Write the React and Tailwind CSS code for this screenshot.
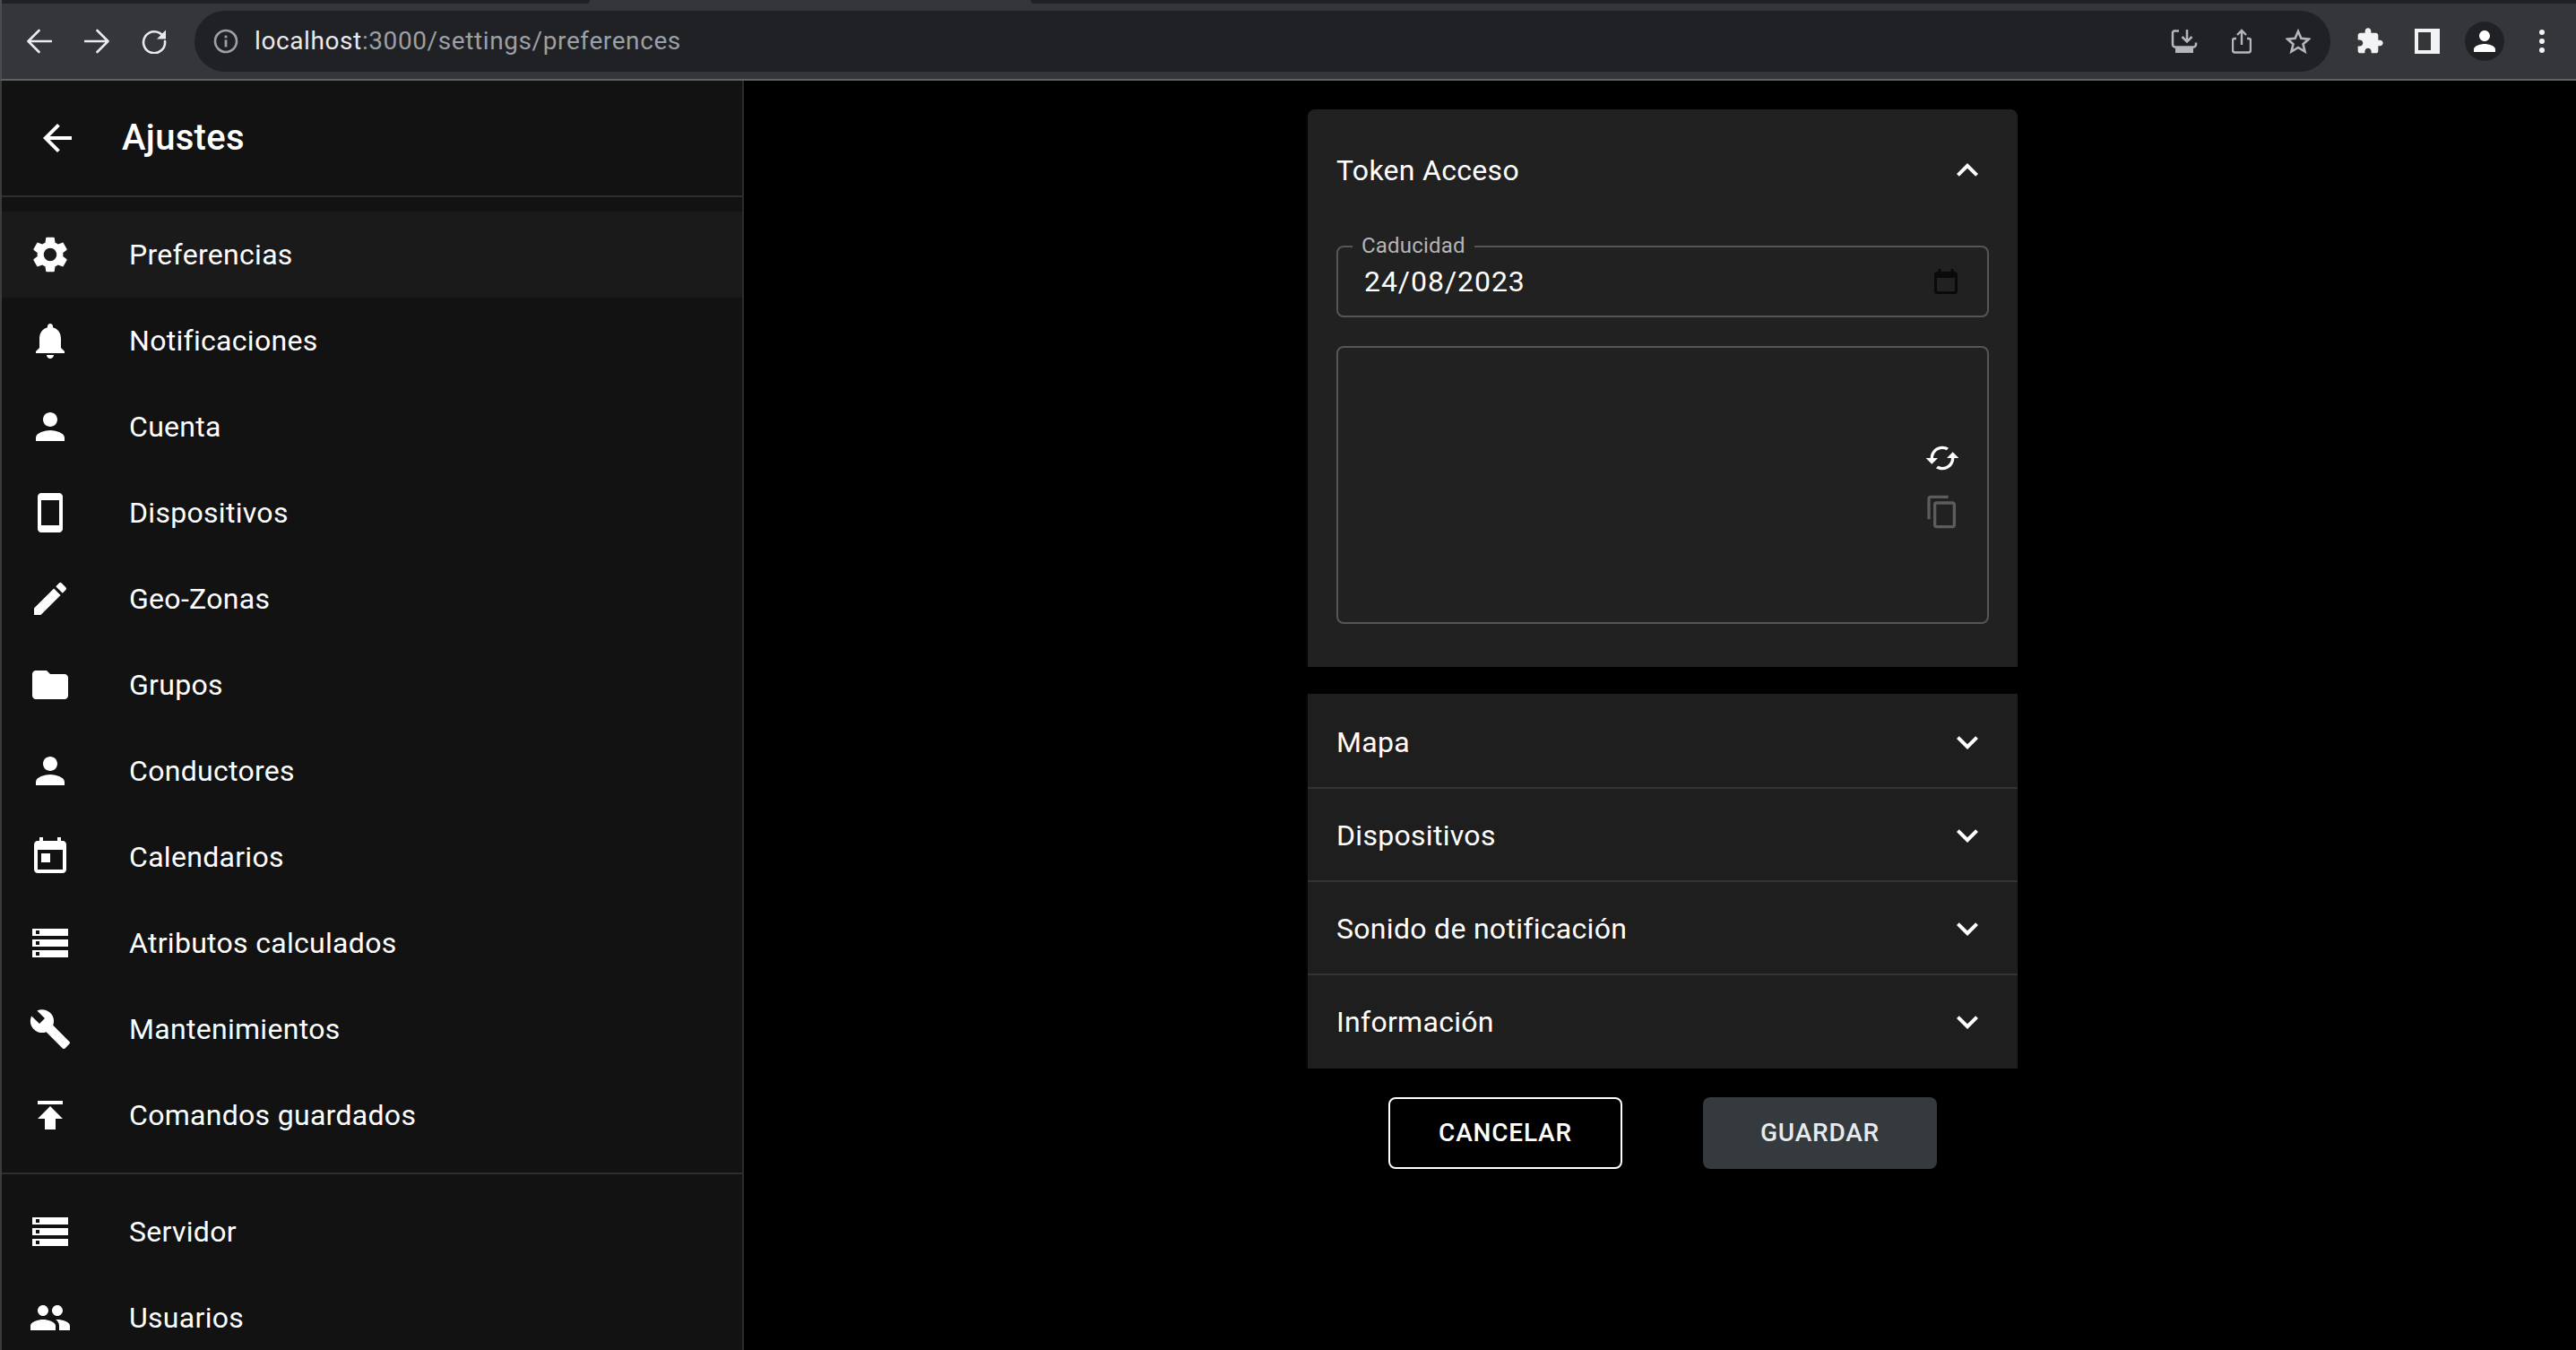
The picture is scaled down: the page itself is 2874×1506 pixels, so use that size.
import React from "react";

const P = {
  settings: "M19.14 12.94c.04-.3.06-.61.06-.94 0-.32-.02-.64-.07-.94l2.03-1.58c.18-.14.23-.41.12-.61l-1.92-3.32c-.12-.22-.37-.29-.59-.22l-2.39.96c-.5-.38-1.03-.7-1.62-.94l-.36-2.54c-.04-.24-.24-.41-.48-.41h-3.84c-.24 0-.43.17-.47.41l-.36 2.54c-.59.24-1.13.57-1.62.94l-2.39-.96c-.22-.08-.47 0-.59.22L2.74 8.87c-.12.21-.08.47.12.61l2.03 1.58c-.05.3-.09.63-.09.94s.02.64.07.94l-2.03 1.58c-.18.14-.23.41-.12.61l1.92 3.32c.12.22.37.29.59.22l2.39-.96c.5.38 1.03.7 1.62.94l.36 2.54c.05.24.24.41.48.41h3.84c.24 0 .44-.17.47-.41l.36-2.54c.59-.24 1.13-.56 1.62-.94l2.39.96c.22.08.47 0 .59-.22l1.92-3.32c.12-.22.07-.47-.12-.61l-2.01-1.58zM12 15.6c-1.98 0-3.6-1.62-3.6-3.6s1.62-3.6 3.6-3.6 3.6 1.62 3.6 3.6-1.62 3.6-3.6 3.6z",
  bell: "M12 22c1.1 0 2-.9 2-2h-4c0 1.1.89 2 2 2zm6-6v-5c0-3.07-1.64-5.64-4.5-6.32V4c0-.83-.67-1.5-1.5-1.5s-1.5.67-1.5 1.5v.68C7.63 5.36 6 7.92 6 11v5l-2 2v1h16v-1l-2-2z",
  person: "M12 12c2.21 0 4-1.79 4-4s-1.79-4-4-4-4 1.79-4 4 1.79 4 4 4zm0 2c-2.67 0-8 1.34-8 4v2h16v-2c0-2.66-5.33-4-8-4z",
  phone: "M17 1.01 7 1c-1.1 0-2 .9-2 2v18c0 1.1.9 2 2 2h10c1.1 0 2-.9 2-2V3c0-1.1-.9-1.99-2-1.99zM17 19H7V5h10v14z",
  edit: "M3 17.25V21h3.75L17.81 9.94l-3.75-3.75L3 17.25zM20.71 7.04c.39-.39.39-1.02 0-1.41l-2.34-2.34a.9959.9959 0 0 0-1.41 0l-1.83 1.83 3.75 3.75 1.83-1.83z",
  folder: "M10 4H4c-1.1 0-1.99.9-1.99 2L2 18c0 1.1.9 2 2 2h16c1.1 0 2-.9 2-2V8c0-1.1-.9-2-2-2h-8l-2-2z",
  today: "M19 3h-1V1h-2v2H8V1H6v2H5c-1.11 0-1.99.9-1.99 2L3 19c0 1.1.89 2 2 2h14c1.1 0 2-.9 2-2V5c0-1.1-.9-2-2-2zm0 16H5V8h14v11zM7 10h5v5H7z",
  storage: "M2 20h20v-4H2v4zm2-3h2v2H4v-2zM2 4v4h20V4H2zm4 3H4V5h2v2zm-4 7h20v-4H2v4zm2-3h2v2H4v-2z",
  build: "M22.7 19l-9.1-9.1c.9-2.3.4-5-1.5-6.9-2-2-5-2.4-7.4-1.3L9 6 6 9 1.6 4.7C.4 7.1.9 10.1 2.9 12.1c1.9 1.9 4.6 2.4 6.9 1.5l9.1 9.1c.4.4 1 .4 1.4 0l2.3-2.3c.5-.4.5-1.1.1-1.4z",
  publish: "M5 4v2h14V4H5zm0 10h4v6h6v-6h4l-7-7-7 7z",
  people: "M16 11c1.66 0 2.99-1.34 2.99-3S17.66 5 16 5c-1.66 0-3 1.34-3 3s1.34 3 3 3zm-8 0c1.66 0 2.99-1.34 2.99-3S9.66 5 8 5C6.34 5 5 6.34 5 8s1.34 3 3 3zm0 2c-2.33 0-7 1.17-7 3.5V19h14v-2.5c0-2.33-4.67-3.5-7-3.5zm8 0c-.29 0-.62.02-.97.05 1.16.84 1.97 1.97 1.97 3.45V19h6v-2.5c0-2.33-4.67-3.5-7-3.5z",
  back: "M20 11H7.83l5.59-5.59L12 4l-8 8 8 8 1.41-1.41L7.83 13H20v-2z",
  more: "M16.59 8.59 12 13.17 7.41 8.59 6 10l6 6 6-6z",
  less: "m12 8-6 6 1.41 1.41L12 10.83l4.59 4.58L18 14z",
  cached: "m19 8-4 4h3c0 3.31-2.69 6-6 6-1.01 0-1.97-.25-2.8-.7l-1.46 1.46C8.97 19.54 10.43 20 12 20c4.42 0 8-3.58 8-8h3l-4-4zM6 12c0-3.31 2.69-6 6-6 1.01 0 1.97.25 2.8.7l1.46-1.46C15.03 4.46 13.57 4 12 4c-4.42 0-8 3.58-8 8H1l4 4 4-4H6z",
  copy: "M16 1H4c-1.1 0-2 .9-2 2v14h2V3h12V1zm3 4H8c-1.1 0-2 .9-2 2v14c0 1.1.9 2 2 2h11c1.1 0 2-.9 2-2V7c0-1.1-.9-2-2-2zm0 16H8V7h11v14z",
  puzzle: "M20.5 11H19V7c0-1.1-.9-2-2-2h-4V3.5C13 2.12 11.88 1 10.5 1S8 2.12 8 3.5V5H4c-1.1 0-1.99.9-1.99 2v3.8H3.5c1.49 0 2.7 1.21 2.7 2.7s-1.21 2.7-2.7 2.7H2V20c0 1.1.9 2 2 2h3.8v-1.5c0-1.49 1.21-2.7 2.7-2.7 1.49 0 2.7 1.21 2.7 2.7V22H17c1.1 0 2-.9 2-2v-4h1.5c1.38 0 2.5-1.12 2.5-2.5S21.88 11 20.5 11z",
};

function Icon({ d, className }) {
  return (
    <svg viewBox="0 0 24 24" fill="currentColor" className={className}>
      <path d={d} />
    </svg>
  );
}

function NavRow({ icon, label, selected }) {
  return (
    <div className={`flex h-[96px] items-center pl-[30px] ${selected ? "bg-[#1a1a1a]" : ""}`}>
      <Icon d={icon} className="h-[48px] w-[48px] shrink-0 text-white" />
      <span className="ml-[64px] text-[32px] leading-[48px] tracking-[0.3px] text-white">{label}</span>
    </div>
  );
}

function Sidebar() {
  const first = [
    ["settings", "Preferencias", true],
    ["bell", "Notificaciones"],
    ["person", "Cuenta"],
    ["phone", "Dispositivos"],
    ["edit", "Geo-Zonas"],
    ["folder", "Grupos"],
    ["person", "Conductores"],
    ["today", "Calendarios"],
    ["storage", "Atributos calculados"],
    ["build", "Mantenimientos"],
    ["publish", "Comandos guardados"],
  ];
  const second = [
    ["storage", "Servidor"],
    ["people", "Usuarios"],
  ];
  return (
    <aside className="flex w-[830px] shrink-0 flex-col border-r-2 border-l-2 border-r-[#2c2c2c] border-l-[#3c3c3c] bg-[#121212]">
      <div className="flex h-[128px] shrink-0 items-center pl-[38px]">
        <Icon d={P.back} className="h-[48px] w-[48px] text-white" />
        <span className="ml-[48px] text-[40px] leading-[56px] font-medium tracking-[0.3px] text-white">Ajustes</span>
      </div>
      <div className="h-[2px] shrink-0 bg-[#2e2e2e]" />
      <div className="shrink-0 py-[16px]">
        {first.map(([i, l, s]) => (
          <NavRow key={l} icon={P[i]} label={l} selected={s} />
        ))}
      </div>
      <div className="h-[2px] shrink-0 bg-[#2e2e2e]" />
      <div className="shrink-0 pt-[16px]">
        {second.map(([i, l]) => (
          <NavRow key={l} icon={P[i]} label={l} />
        ))}
      </div>
    </aside>
  );
}

function AccordionRow({ label, divider, last }) {
  return (
    <div
      className={`flex items-center justify-between border-t-2 px-[32px] pt-[2px] ${last ? "h-[106px] pb-[2px]" : "h-[104px]"} ${
        divider ? "border-[#333333]" : "border-transparent"
      }`}
    >
      <span className="text-[32px] leading-[48px] tracking-[0.3px] text-white">{label}</span>
      <Icon d={P.more} className="h-[48px] w-[48px] text-white" />
    </div>
  );
}

function TokenCard() {
  return (
    <section className="h-[622px] rounded-t-[8px] bg-[#212121] px-[32px]">
      <div className="flex h-[136px] items-center justify-between">
        <span className="text-[32px] leading-[48px] tracking-[0.3px] text-white">Token Acceso</span>
        <Icon d={P.less} className="h-[48px] w-[48px] text-white" />
      </div>
      <div className="relative mt-[16px] flex h-[80px] items-center justify-between rounded-[8px] border-2 border-[#565656] pr-[33px] pl-[29px]">
        <span className="absolute top-[-14px] left-[16px] bg-[#212121] px-[10px] text-[24px] leading-[24px] tracking-[0.2px] text-[#b5b5b5]">
          Caducidad
        </span>
        <span className="text-[32px] leading-[44px] tracking-[0.95px] text-white">24/08/2023</span>
        <svg viewBox="0 0 26 28" className="h-[28px] w-[26px] text-[#0a0a0a]" fill="none" stroke="currentColor">
          <rect x="1.5" y="4.5" width="23" height="22" rx="2" strokeWidth="3" />
          <path d="M1.5 7.5h23" strokeWidth="5" />
          <path d="M6 0v4M20 0v4" strokeWidth="3" />
        </svg>
      </div>
      <div className="mt-[32px] flex h-[310px] flex-col items-end justify-center gap-[20px] rounded-[8px] border-2 border-[#565656] pr-[30px]">
        <Icon d={P.cached} className="h-[40px] w-[40px] text-white" />
        <Icon d={P.copy} className="h-[40px] w-[40px] text-[#5c5c5c]" />
      </div>
    </section>
  );
}

function Chrome() {
  return (
    <header className="h-[90px] shrink-0 border-b-2 border-l-2 border-b-[#5f6368] border-l-[#4a4b4f] bg-[#35363a]">
      <div className="flex h-[4px]">
        <div className="w-[656px] rounded-br-[8px] bg-[#202124]" />
        <div className="w-[492px]" />
        <div className="flex-1 rounded-bl-[8px] bg-[#202124]" />
      </div>
      <div className="flex h-[84px] items-center">
        <div className="ml-[10px] flex">
          <div className="flex h-[64px] w-[64px] items-center justify-center">
            <svg viewBox="0 0 28 28" className="h-[28px] w-[28px]" fill="none" stroke="#e8eaed" strokeWidth="2.6" strokeLinecap="round" strokeLinejoin="round">
              <path d="M27 14H2M13.5 2 1.5 14l12 12" />
            </svg>
          </div>
          <div className="flex h-[64px] w-[64px] items-center justify-center">
            <svg viewBox="0 0 28 28" className="h-[28px] w-[28px]" fill="none" stroke="#e8eaed" strokeWidth="2.6" strokeLinecap="round" strokeLinejoin="round">
              <path d="M1 14h25M14.5 2l12 12-12 12" />
            </svg>
          </div>
          <div className="flex h-[64px] w-[64px] items-center justify-center">
            <svg viewBox="0 0 28 28" className="h-[28px] w-[28px]" fill="none" stroke="#e8eaed" strokeWidth="2.6" strokeLinecap="round">
              <path d="M24 8.5A12 12 0 1 0 26 14" />
              <path d="M27 1.5v10H17z" fill="#e8eaed" stroke="none" />
            </svg>
          </div>
        </div>
        <div className="ml-[13px] flex h-[68px] w-[2383px] items-center rounded-full bg-[#202124] pr-[22px] pl-[21px]">
          <svg viewBox="0 0 28 28" className="h-[28px] w-[28px] shrink-0">
            <circle cx="14" cy="14" r="12" fill="none" stroke="#9aa0a6" strokeWidth="2.6" />
            <rect x="12.6" y="12.4" width="2.8" height="8" fill="#9aa0a6" />
            <rect x="12.6" y="7.6" width="2.8" height="2.8" fill="#9aa0a6" />
          </svg>
          <span className="ml-[18px] text-[28px] leading-[36px] tracking-[0.6px] text-[#9aa0a6]">
            <span className="text-[#e8eaed]">localhost</span>:3000/settings/preferences
          </span>
          <div className="ml-auto flex items-center gap-[38px]">
            <svg viewBox="0 0 30 28" className="h-[28px] w-[30px]" fill="none" stroke="#b4b7ba" strokeWidth="2.5">
              <path d="M9 2.5H4a2 2 0 0 0-2 2v13a3 3 0 0 0 3 3h20a3 3 0 0 0 3-3v-2" />
              <rect x="5" y="21" width="20" height="6" fill="#b4b7ba" stroke="none" />
              <path d="M18 1v13M12.5 9l5.5 5.5L23.5 9" />
            </svg>
            <svg viewBox="0 0 22 28" className="h-[28px] w-[22px]" fill="none" stroke="#b4b7ba" strokeWidth="2.4">
              <path d="M5 11H3a2 2 0 0 0-2 2v11a2.500 2.500 0 0 0 2 2.500h16a2.500 2.500 0 0 0 2-2.500V13a2 2 0 0 0-2-2h-2" />
              <path d="M11 18V2M6 7l5-5 5 5" />
            </svg>
            <svg viewBox="0 0 28 28" className="h-[28px] w-[28px]" fill="none" stroke="#b4b7ba" strokeWidth="2.6">
              <path d="M14 3l3.400 7.800 8.600.800-6.500 5.600 2 8.300-7.500-4.500-7.500 4.500 2-8.300L2 11.600l8.600-.8z" />
            </svg>
          </div>
        </div>
        <Icon d={P.puzzle} className="ml-[28px] h-[32px] w-[32px] text-[#f1f3f4]" />
        <svg viewBox="0 0 28 28" className="ml-[34px] h-[28px] w-[28px]">
          <rect width="28" height="28" fill="#f1f3f4" />
          <rect x="4" y="4" width="14" height="20" fill="#35363a" />
        </svg>
        <div className="ml-[28px] flex h-[44px] w-[44px] items-center justify-center rounded-full bg-[#202124]">
          <Icon d={P.person} className="h-[36px] w-[36px] text-white" />
        </div>
        <div className="ml-[39px] flex flex-col gap-[4px]">
          <div className="h-[6px] w-[6px] rounded-full bg-[#f1f3f4]" />
          <div className="h-[6px] w-[6px] rounded-full bg-[#f1f3f4]" />
          <div className="h-[6px] w-[6px] rounded-full bg-[#f1f3f4]" />
        </div>
      </div>
    </header>
  );
}

export default function App() {
  return (
    <div className="flex h-[1506px] w-[2874px] flex-col overflow-hidden bg-black font-['Roboto',sans-serif]">
      <Chrome />
      <div className="flex min-h-0 flex-1">
        <Sidebar />
        <main className="flex-1 pt-[32px] pl-[629px]">
          <div className="w-[792px]">
            <TokenCard />
            <section className="mt-[30px] bg-[#1e1e1e]">
              <AccordionRow label="Mapa" />
              <AccordionRow label="Dispositivos" divider />
              <AccordionRow label="Sonido de notificación" divider />
              <AccordionRow label="Información" divider last />
            </section>
            <div className="mt-[32px] flex justify-evenly">
              <button className="h-[80px] w-[261px] rounded-[8px] border-2 border-white text-[28px] font-medium tracking-[0.8px] text-white">
                CANCELAR
              </button>
              <button className="h-[80px] w-[261px] rounded-[8px] bg-[#353a3e] text-[28px] font-medium tracking-[0.8px] text-[#e8eaec]">
                GUARDAR
              </button>
            </div>
          </div>
        </main>
      </div>
    </div>
  );
}
